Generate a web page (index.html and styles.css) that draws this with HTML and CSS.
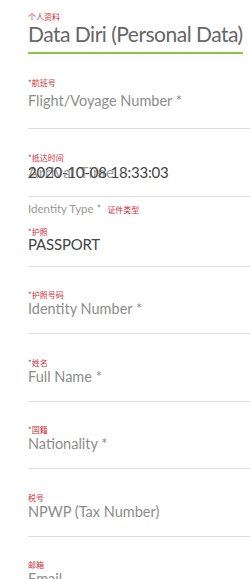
FILE: index.html
```html
<!DOCTYPE html>
<html lang="zh">
<head>
<meta charset="UTF-8">
<meta name="viewport" content="width=device-width, initial-scale=1.0">
<title>Data Diri</title>
<link rel="stylesheet" href="styles.css">
</head>
<body>
<div class="form-page">
  <div class="section-head">
    <div class="cn-label plain">个人资料</div>
    <h1 class="section-title">Data Diri (Personal Data)</h1>
  </div>

  <div class="field first">
    <div class="cn-label">*航班号</div>
    <div class="value placeholder">Flight/Voyage Number *</div>
  </div>

  <div class="field">
    <div class="cn-label">*抵达时间</div>
    <div class="value filled date-value">
      <span class="ghost">Arrival Time</span>
      <span class="date-text">2020-10-08 18:33:03</span>
    </div>
  </div>

  <div class="field select-field">
    <div class="select-label">Identity Type * <span class="cn-inline">证件类型</span></div>
    <div class="cn-label tight">*护照</div>
    <div class="value filled caps">PASSPORT</div>
  </div>

  <div class="field">
    <div class="cn-label">*护照号码</div>
    <div class="value placeholder">Identity Number *</div>
  </div>

  <div class="field">
    <div class="cn-label">*姓名</div>
    <div class="value placeholder">Full Name *</div>
  </div>

  <div class="field">
    <div class="cn-label">*国籍</div>
    <div class="value placeholder">Nationality *</div>
  </div>

  <div class="field">
    <div class="cn-label">税号</div>
    <div class="value placeholder">NPWP (Tax Number)</div>
  </div>

  <div class="field">
    <div class="cn-label">邮箱</div>
    <div class="value placeholder">Email</div>
  </div>
</div>
</body>
</html>
```

FILE: styles.css
```css
body {
    margin: 0;
    padding: 0;
    background-color: #ffffff;
    font-family: "Lato", "Noto Sans CJK SC", sans-serif;
    overflow: hidden;
}

.form-page {
    padding-left: 28px;
}

.section-head {
    padding-top: 12px;
    width: 215px;
    border-bottom: 2px solid #8cc63f;
    padding-bottom: 7px;
}

.cn-label {
    font-family: "Noto Sans CJK SC", sans-serif;
    font-size: 8px;
    line-height: 10px;
    color: #c9303a;
}

.section-title {
    margin: 0;
    font-weight: normal;
    font-size: 21px;
    line-height: 23px;
    color: #666666;
    white-space: nowrap;
    letter-spacing: -0.5px;
}

/* every input row */
.field {
    padding: 23.5px 0 15px;
    border-bottom: 1px solid #dddddd;
}

.field.first {
    padding-top: 24px;
    padding-bottom: 18px;
}

.field.first .value {
    margin-top: 4px;
}

.value {
    font-size: 14.5px;
    line-height: 18px;
    white-space: nowrap;
}

.placeholder {
    color: #8c8c8c;
}

.filled {
    color: #444444;
    font-size: 15px;
    letter-spacing: -0.2px;
}

.date-value {
    position: relative;
}

.ghost {
    position: absolute;
    left: 0;
    top: 0;
    color: #9a9a9a;
    letter-spacing: 0.6px;
}

.date-text {
    position: relative;
}

.select-field {
    padding-top: 5px;
    padding-bottom: 14px;
}

.select-label {
    font-size: 11.5px;
    line-height: 14px;
    color: #999999;
}

.cn-inline {
    font-family: "Noto Sans CJK SC", sans-serif;
    font-size: 8px;
    color: #c9303a;
    margin-left: 3px;
}

.cn-label.tight {
    margin-top: 11px;
    line-height: 8px;
}

.caps {
    line-height: 16px;
}
```
